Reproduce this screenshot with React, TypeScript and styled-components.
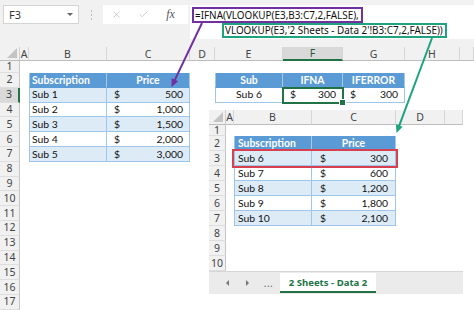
import React from 'react';
import styled, { createGlobalStyle, css } from 'styled-components';
import { X, Check } from 'lucide-react';

const UI_FONT = `"Noto Sans", "Open Sans", sans-serif`;
const CELL_FONT = `Lato, "Noto Sans", sans-serif`;
const GREEN = '#217346';
const BORDER_BLUE = '#9fc5e8';

const GlobalStyle = createGlobalStyle`
  html, body { margin: 0; padding: 0; background: #fff; }
  body { width: 474px; height: 310px; overflow: hidden; }
  * { box-sizing: border-box; }
`;

const Window = styled.div`
  position: relative;
  width: 474px;
  height: 310px;
  overflow: hidden;
  background: #fff;
  font-family: ${CELL_FONT};
`;

/* ---------- formula bar ---------- */
const FormulaBar = styled.div`
  display: flex;
  align-items: flex-start;
  height: 47px;
  padding-top: 5px;
  background: #f1f1f1;
  font-family: ${UI_FONT};
`;

const NameBox = styled.div`
  margin-left: 3px;
  width: 76px;
  height: 19px;
  display: flex;
  align-items: center;
  justify-content: space-between;
  padding: 0 5px 0 5px;
  background: #fff;
  border: 1px solid #d4d4d4;
  font-size: 11px;
  color: #333;
`;

const Caret = styled.span`
  width: 0;
  height: 0;
  border-left: 3px solid transparent;
  border-right: 3px solid transparent;
  border-top: 3px solid #666;
`;

const Grip = styled.div`
  width: 24px;
  height: 19px;
  display: flex;
  flex-direction: column;
  align-items: center;
  justify-content: center;
  gap: 2px;
`;

const GripDot = styled.span`
  width: 1px;
  height: 2px;
  background: #bdbdbd;
`;

const FxGroup = styled.div`
  width: 85px;
  height: 19px;
  display: flex;
  align-items: center;
  background: #fff;
`;

const FxButton = styled.span<{ $active?: boolean }>`
  width: 27px;
  display: flex;
  align-items: center;
  justify-content: center;
  color: ${(p) => (p.$active ? '#555' : '#b8b8b8')};
  font-family: "Liberation Serif", serif;
  font-style: italic;
  font-size: 12px;
`;

const FormulaInput = styled.div`
  flex: 1;
  margin-left: 2px;
  height: 34px;
  padding-top: 2px;
  background: #fff;
  font-family: ${UI_FONT};
  font-size: 9.9px;
  color: #111;
`;

const FormulaLine = styled.div<{ $color: string; $indent: number; $h: number }>`
  width: fit-content;
  height: ${(p) => p.$h}px;
  margin-left: ${(p) => p.$indent}px;
  padding: 0 2px 0 1px;
  border: 2px solid ${(p) => p.$color};
  line-height: ${(p) => p.$h - 4}px;
  white-space: nowrap;
`;

/* ---------- grid ---------- */
const SheetBody = styled.div`
  display: flex;
  flex-direction: column;
`;

const Row = styled.div<{ $h: number }>`
  display: flex;
  flex: none;
  height: ${(p) => p.$h}px;
`;

const Corner = styled.div<{ $w: number }>`
  width: ${(p) => p.$w}px;
  height: 100%;
  flex: none;
  background: #f1f1f1;
  border-right: 1px solid #cfcfcf;
  border-bottom: 1px solid #bdbdbd;
  display: flex;
  align-items: flex-end;
  justify-content: flex-end;
  padding: 0 2px 2px 0;
`;

const CornerTriangle = styled.span`
  width: 0;
  height: 0;
  border-left: 10px solid transparent;
  border-bottom: 10px solid #c4c4c4;
`;

const ColHead = styled.div<{ $w: number; $selected?: boolean }>`
  width: ${(p) => p.$w}px;
  height: 100%;
  flex: none;
  display: flex;
  align-items: center;
  justify-content: center;
  background: ${(p) => (p.$selected ? '#d9d9d9' : '#f1f1f1')};
  border-right: 1px solid #d6d6d6;
  border-bottom: ${(p) => (p.$selected ? `2px solid ${GREEN}` : '1px solid #bdbdbd')};
  font-family: ${UI_FONT};
  font-size: 10.5px;
  line-height: 10px;
  color: ${(p) => (p.$selected ? '#2a5a3c' : '#444')};
`;

const RowHead = styled.div<{ $w: number; $selected?: boolean }>`
  width: ${(p) => p.$w}px;
  height: 100%;
  flex: none;
  display: flex;
  align-items: center;
  justify-content: center;
  background: ${(p) => (p.$selected ? '#d9d9d9' : '#f1f1f1')};
  border-right: ${(p) => (p.$selected ? `2px solid ${GREEN}` : '1px solid #c6c6c6')};
  border-bottom: 1px solid #dedede;
  font-family: ${UI_FONT};
  font-size: 10.5px;
  line-height: 9px;
  color: #444;
`;

type Kind = 'head' | 'band' | 'plain';

const Cell = styled.div<{
  $w: number;
  $kind?: Kind;
  $align?: 'left' | 'center';
  $first?: boolean;
  $pad: number;
  $selected?: boolean;
}>`
  position: relative;
  width: ${(p) => p.$w}px;
  height: 100%;
  flex: none;
  display: flex;
  align-items: center;
  justify-content: ${(p) => (p.$align === 'center' ? 'center' : 'flex-start')};
  padding-left: ${(p) => (p.$align === 'center' ? 0 : p.$pad)}px;
  font-size: 10.4px;
  line-height: 1;
  color: #111;
  white-space: nowrap;
  ${(p) =>
    p.$kind &&
    css`
      border-right: 1px solid ${BORDER_BLUE};
      border-bottom: 1px solid ${BORDER_BLUE};
      ${p.$first && `border-left: 1px solid ${BORDER_BLUE};`}
    `}
  ${(p) =>
    p.$kind === 'head' &&
    css`
      background: #5b9bd5;
      color: #fff;
      font-weight: 700;
      border-right-color: #a9c9ea;
      border-bottom-color: #5b9bd5;
    `}
  ${(p) => p.$kind === 'band' && css`background: #ddebf7;`}
  ${(p) => p.$kind === 'plain' && css`background: #fff;`}
  ${(p) =>
    p.$selected &&
    css`
      outline: 2px solid ${GREEN};
      outline-offset: -1px;
      z-index: 1;
      &::after {
        content: '';
        position: absolute;
        right: -4px;
        bottom: -4px;
        width: 5px;
        height: 5px;
        background: ${GREEN};
        border: 1px solid #fff;
      }
    `}
`;

const Money = styled.span<{ $l: number; $r: number }>`
  flex: 1;
  display: flex;
  justify-content: space-between;
  padding: 0 ${(p) => p.$r}px 0 ${(p) => p.$l}px;
`;

const Outlined = styled.div<{ $color: string }>`
  display: flex;
  height: 100%;
  outline: 2px solid ${(p) => p.$color};
  outline-offset: 0px;
  z-index: 2;
  position: relative;
`;

/* ---------- second (pasted) sheet ---------- */
const PastedSheet = styled.div`
  position: absolute;
  left: 209px;
  top: 110px;
  width: 254px;
  display: flex;
  flex-direction: column;
  background: #fff;
`;

const TabBar = styled.div`
  display: flex;
  align-items: flex-start;
  height: 23px;
  padding: 1px 0 0 8px;
  background: #ebebeb;
  border-top: 1px solid #d6d6d6;
  font-family: ${UI_FONT};
`;

const NavButton = styled.span<{ $dir: 'left' | 'right' }>`
  width: 20px;
  height: 20px;
  display: flex;
  align-items: center;
  justify-content: center;
  &::before {
    content: '';
    width: 0;
    height: 0;
    border-top: 3px solid transparent;
    border-bottom: 3px solid transparent;
    ${(p) =>
      p.$dir === 'left'
        ? css`border-right: 3px solid #777;`
        : css`border-left: 3px solid #777;`}
  }
`;

const Ellipsis = styled.span`
  width: 23px;
  height: 20px;
  display: flex;
  align-items: center;
  justify-content: center;
  color: #666;
  font-size: 10px;
  letter-spacing: 0.5px;
`;

const SheetTab = styled.span`
  width: 96px;
  height: 20px;
  display: flex;
  align-items: center;
  justify-content: center;
  background: #fff;
  border-bottom: 2px solid ${GREEN};
  color: ${GREEN};
  font-size: 9.6px;
  font-weight: 700;
  white-space: nowrap;
`;

const Overlay = styled.svg`
  position: absolute;
  left: 0;
  top: 0;
  width: 474px;
  height: 310px;
  pointer-events: none;
  z-index: 5;
`;

/* ---------- data ---------- */
type Col = { key: string; label: string; w: number; selected?: boolean };
type CellSpec = {
  text?: string;
  money?: string;
  kind: Kind;
  align?: 'left' | 'center';
  first?: boolean;
  selected?: boolean;
};
type RowSpec = {
  n: number;
  h: number;
  selected?: boolean;
  cells?: Record<string, CellSpec>;
  outline?: { from: string; to: string; color: string };
};
type SheetSpec = {
  rowHeadW: number;
  headH: number;
  cols: Col[];
  rows: RowSpec[];
  textPad: number;
  moneyPad: [number, number];
};

const R1 = 14.8;

const SHEET1: SheetSpec = {
  rowHeadW: 20,
  headH: 14,
  textPad: 2,
  moneyPad: [5, 6],
  cols: [
    { key: 'A', label: 'A', w: 9 },
    { key: 'B', label: 'B', w: 78 },
    { key: 'C', label: 'C', w: 83 },
    { key: 'D', label: 'D', w: 25 },
    { key: 'E', label: 'E', w: 68 },
    { key: 'F', label: 'F', w: 60, selected: true },
    { key: 'G', label: 'G', w: 62 },
    { key: 'H', label: 'H', w: 55 },
    { key: 'I', label: '', w: 14 },
  ],
  rows: [
    { n: 1, h: 12 },
    {
      n: 2,
      h: R1,
      cells: {
        B: { text: 'Subscription', kind: 'head', first: true },
        C: { text: 'Price', kind: 'head', align: 'center' },
        E: { text: 'Sub', kind: 'head', align: 'center', first: true },
        F: { text: 'IFNA', kind: 'head', align: 'center' },
        G: { text: 'IFERROR', kind: 'head', align: 'center' },
      },
    },
    {
      n: 3,
      h: R1,
      selected: true,
      cells: {
        B: { text: 'Sub 1', kind: 'band', first: true },
        C: { money: '500', kind: 'band' },
        E: { text: 'Sub 6', kind: 'plain', align: 'center', first: true },
        F: { money: '300', kind: 'plain', selected: true },
        G: { money: '300', kind: 'plain' },
      },
    },
    { n: 4, h: R1, cells: { B: { text: 'Sub 2', kind: 'plain', first: true }, C: { money: '1,000', kind: 'plain' } } },
    { n: 5, h: R1, cells: { B: { text: 'Sub 3', kind: 'band', first: true }, C: { money: '1,500', kind: 'band' } } },
    { n: 6, h: R1, cells: { B: { text: 'Sub 4', kind: 'plain', first: true }, C: { money: '2,000', kind: 'plain' } } },
    { n: 7, h: R1, cells: { B: { text: 'Sub 5', kind: 'band', first: true }, C: { money: '3,000', kind: 'band' } } },
    ...[8, 9, 10, 11, 12, 13, 14, 15, 16, 17].map((n) => ({ n, h: R1 })),
  ],
};

const SHEET2: SheetSpec = {
  rowHeadW: 17,
  headH: 15,
  textPad: 3,
  moneyPad: [5, 7],
  cols: [
    { key: 'A', label: 'A', w: 8 },
    { key: 'B', label: 'B', w: 78 },
    { key: 'C', label: 'C', w: 84 },
    { key: 'D', label: 'D', w: 49 },
    { key: 'E', label: '', w: 18 },
  ],
  rows: [
    { n: 1, h: 11 },
    {
      n: 2,
      h: 15,
      cells: {
        B: { text: 'Subscription', kind: 'head', first: true },
        C: { text: 'Price', kind: 'head', align: 'center' },
      },
    },
    {
      n: 3,
      h: 15,
      outline: { from: 'B', to: 'C', color: '#d8404f' },
      cells: { B: { text: 'Sub 6', kind: 'band', first: true }, C: { money: '300', kind: 'band' } },
    },
    { n: 4, h: 15, cells: { B: { text: 'Sub 7', kind: 'plain', first: true }, C: { money: '600', kind: 'plain' } } },
    { n: 5, h: 15, cells: { B: { text: 'Sub 8', kind: 'band', first: true }, C: { money: '1,200', kind: 'band' } } },
    { n: 6, h: 15, cells: { B: { text: 'Sub 9', kind: 'plain', first: true }, C: { money: '1,800', kind: 'plain' } } },
    { n: 7, h: 15, cells: { B: { text: 'Sub 10', kind: 'band', first: true }, C: { money: '2,100', kind: 'band' } } },
    { n: 8, h: 15 },
    { n: 9, h: 15 },
    { n: 10, h: 15 },
  ],
};

/* ---------- components ---------- */
function renderCell(sheet: SheetSpec, col: Col, spec?: CellSpec) {
  return (
    <Cell
      key={col.key}
      $w={col.w}
      $kind={spec?.kind}
      $align={spec?.align}
      $first={spec?.first}
      $pad={sheet.textPad}
      $selected={spec?.selected}
    >
      {spec?.text}
      {spec?.money && (
        <Money $l={sheet.moneyPad[0]} $r={sheet.moneyPad[1]}>
          <span>$</span>
          <span>{spec.money}</span>
        </Money>
      )}
    </Cell>
  );
}

function SheetRow({ sheet, row }: { sheet: SheetSpec; row: RowSpec }) {
  const out: React.ReactNode[] = [];
  let group: React.ReactNode[] | null = null;
  sheet.cols.forEach((col) => {
    const node = renderCell(sheet, col, row.cells?.[col.key]);
    if (row.outline && col.key === row.outline.from) group = [];
    if (group) {
      group.push(node);
      if (row.outline && col.key === row.outline.to) {
        out.push(
          <Outlined key={`g-${col.key}`} $color={row.outline.color}>
            {group}
          </Outlined>
        );
        group = null;
      }
    } else {
      out.push(node);
    }
  });
  return (
    <Row $h={row.h}>
      <RowHead $w={sheet.rowHeadW} $selected={row.selected}>
        {row.n}
      </RowHead>
      {out}
    </Row>
  );
}

function Sheet({ sheet }: { sheet: SheetSpec }) {
  return (
    <SheetBody>
      <Row $h={sheet.headH}>
        <Corner $w={sheet.rowHeadW}>
          <CornerTriangle />
        </Corner>
        {sheet.cols.map((c) => (
          <ColHead key={c.key} $w={c.w} $selected={c.selected}>
            {c.label}
          </ColHead>
        ))}
      </Row>
      {sheet.rows.map((r) => (
        <SheetRow key={r.n} sheet={sheet} row={r} />
      ))}
    </SheetBody>
  );
}

function Arrow({
  x1, y1, x2, y2, color,
}: { x1: number; y1: number; x2: number; y2: number; color: string }) {
  const dx = x2 - x1;
  const dy = y2 - y1;
  const len = Math.hypot(dx, dy);
  const ux = dx / len;
  const uy = dy / len;
  const hl = 8;
  const hw = 3.6;
  const bx = x2 - ux * hl;
  const by = y2 - uy * hl;
  const px = -uy;
  const py = ux;
  const pts = `${x2},${y2} ${bx + px * hw},${by + py * hw} ${bx - px * hw},${by - py * hw}`;
  return (
    <g>
      <line x1={x1} y1={y1} x2={bx + ux} y2={by + uy} stroke={color} strokeWidth={2} />
      <polygon points={pts} fill={color} />
    </g>
  );
}

export default function App() {
  return (
    <>
      <GlobalStyle />
      <Window>
        <FormulaBar>
          <NameBox>
            <span>F3</span>
            <Caret />
          </NameBox>
          <Grip>
            <GripDot />
            <GripDot />
            <GripDot />
          </Grip>
          <FxGroup>
            <FxButton>
              <X size={11} strokeWidth={1.5} />
            </FxButton>
            <FxButton>
              <Check size={11} strokeWidth={1.5} />
            </FxButton>
            <FxButton $active>fx</FxButton>
          </FxGroup>
          <FormulaInput>
            <FormulaLine $color="#7030a0" $indent={2} $h={16}>
              =IFNA(VLOOKUP(E3,B3:C7,2,FALSE),
            </FormulaLine>
            <FormulaLine $color="#1fa37e" $indent={32} $h={15}>
              VLOOKUP(E3,'2 Sheets - Data 2'!B3:C7,2,FALSE))
            </FormulaLine>
          </FormulaInput>
        </FormulaBar>

        <Sheet sheet={SHEET1} />

        <PastedSheet>
          <Sheet sheet={SHEET2} />
          <TabBar>
            <NavButton $dir="left" />
            <NavButton $dir="right" />
            <Ellipsis>...</Ellipsis>
            <SheetTab>2 Sheets - Data 2</SheetTab>
          </TabBar>
        </PastedSheet>

        <Overlay viewBox="0 0 474 310">
          <Arrow x1={202} y1={23} x2={171.5} y2={87} color="#7030a0" />
          <Arrow x1={432} y1={38} x2={396.5} y2={133} color="#1fa37e" />
        </Overlay>
      </Window>
    </>
  );
}
